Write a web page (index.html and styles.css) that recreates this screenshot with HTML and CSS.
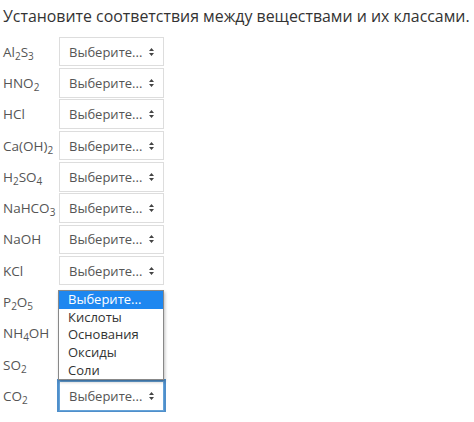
FILE: index.html
```html
<!DOCTYPE html>
<html lang="ru">
<head>
    <meta charset="UTF-8">
    <meta name="viewport" content="width=device-width, initial-scale=1.0">
    <title>Соответствия</title>
    <link rel="stylesheet" href="styles.css">
</head>
<body>
    <h3 class="title">Установите соответствия между веществами и их классами.</h3>

    <div class="rows">
        <div class="row">
            <span class="label">Al<sub>2</sub>S<sub>3</sub></span>
            <div class="select">Выберите...<svg class="arrows" width="5" height="8" viewBox="0 0 5 8"><path d="M2.5 0L5 3H0z M2.5 8L5 5H0z"/></svg></div>
        </div>
        <div class="row">
            <span class="label">HNO<sub>2</sub></span>
            <div class="select">Выберите...<svg class="arrows" width="5" height="8" viewBox="0 0 5 8"><path d="M2.5 0L5 3H0z M2.5 8L5 5H0z"/></svg></div>
        </div>
        <div class="row">
            <span class="label">HCl</span>
            <div class="select">Выберите...<svg class="arrows" width="5" height="8" viewBox="0 0 5 8"><path d="M2.5 0L5 3H0z M2.5 8L5 5H0z"/></svg></div>
        </div>
        <div class="row">
            <span class="label">Ca(OH)<sub>2</sub></span>
            <div class="select">Выберите...<svg class="arrows" width="5" height="8" viewBox="0 0 5 8"><path d="M2.5 0L5 3H0z M2.5 8L5 5H0z"/></svg></div>
        </div>
        <div class="row">
            <span class="label">H<sub>2</sub>SO<sub>4</sub></span>
            <div class="select">Выберите...<svg class="arrows" width="5" height="8" viewBox="0 0 5 8"><path d="M2.5 0L5 3H0z M2.5 8L5 5H0z"/></svg></div>
        </div>
        <div class="row">
            <span class="label">NaHCO<sub>3</sub></span>
            <div class="select">Выберите...<svg class="arrows" width="5" height="8" viewBox="0 0 5 8"><path d="M2.5 0L5 3H0z M2.5 8L5 5H0z"/></svg></div>
        </div>
        <div class="row">
            <span class="label">NaOH</span>
            <div class="select">Выберите...<svg class="arrows" width="5" height="8" viewBox="0 0 5 8"><path d="M2.5 0L5 3H0z M2.5 8L5 5H0z"/></svg></div>
        </div>
        <div class="row">
            <span class="label">KCl</span>
            <div class="select">Выберите...<svg class="arrows" width="5" height="8" viewBox="0 0 5 8"><path d="M2.5 0L5 3H0z M2.5 8L5 5H0z"/></svg></div>
        </div>
        <div class="row">
            <span class="label">P<sub>2</sub>O<sub>5</sub></span>
        </div>
        <div class="row">
            <span class="label">NH<sub>4</sub>OH</span>
        </div>
        <div class="row">
            <span class="label">SO<sub>2</sub></span>
        </div>
        <div class="row">
            <span class="label">CO<sub>2</sub></span>
            <div class="select focused">Выберите...<svg class="arrows" width="5" height="8" viewBox="0 0 5 8"><path d="M2.5 0L5 3H0z M2.5 8L5 5H0z"/></svg>
                <ul class="dropdown">
                    <li class="active">Выберите...</li>
                    <li>Кислоты</li>
                    <li>Основания</li>
                    <li>Оксиды</li>
                    <li>Соли</li>
                </ul>
            </div>
        </div>
    </div>
</body>
</html>
```
FILE: styles.css
```css
body {
    margin: 0;
    padding: 0 3px;
    font-family: "Open Sans", sans-serif;
    color: #444;
    background: white;
}
.title {
    margin: 5px 0 9px;
    font-size: 15.9px;
    font-weight: normal;
    line-height: 22px;
    white-space: nowrap;
    color: #333;
}
.rows {
    display: flex;
    flex-direction: column;
}
.row {
    display: flex;
    align-items: center;
    height: 31.3px;
}
.label {
    width: 56px;
    font-size: 13.5px;
    color: #555;
}
.label sub {
    font-size: 10px;
    vertical-align: -3px;
    line-height: 0;
}
.select {
    position: relative;
    box-sizing: border-box;
    width: 105px;
    height: 29.5px;
    padding: 0 9px;
    display: flex;
    align-items: center;
    justify-content: space-between;
    border: 1px solid #ddd;
    background: white;
    font-size: 13px;
    color: #555;
}
.arrows {
    fill: #444;
}
.focused {
    border: 1px solid #66a3d8;
    box-shadow: 0 0 0 2px #4f8fcb;
}
.dropdown {
    position: absolute;
    left: -2px;
    bottom: 100%;
    margin: 0 0 2px;
    padding: 0;
    list-style: none;
    width: 106px;
    box-sizing: border-box;
    border: 1px solid #888;
    background: white;
    box-shadow: 1px 2px 3px rgba(0, 0, 0, 0.25);
}
.dropdown li {
    height: 17.6px;
    line-height: 17.6px;
    padding-left: 9px;
    font-size: 13px;
    color: #333;
}
.dropdown li.active {
    background: #1e87f0;
    color: white;
}
```
